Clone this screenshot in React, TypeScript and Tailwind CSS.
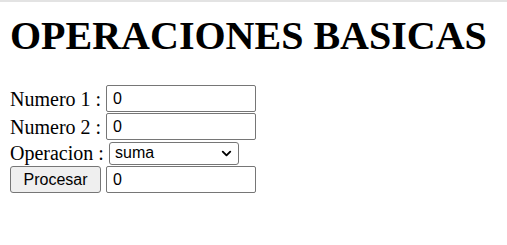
import { ChevronDown } from "lucide-react";

const serif = "font-['Liberation_Serif',_'Times_New_Roman',_serif]";
const sans = "font-['Liberation_Sans',_Arial,_sans-serif]";

function Field({ value }: { value: string }) {
  return (
    <div className={`w-[150px] h-[27px] border border-[#767676] rounded-[2px] bg-white flex items-center pl-[6px] text-[16px] text-black ${sans}`}>
      {value}
    </div>
  );
}

export default function App() {
  return (
    <div className="w-[507px] h-[245px] bg-white border-t-2 border-[#e3e3e3] text-black">
      <div className="pl-[10px] pt-[11px]">
        <h1 className={`${serif} font-bold text-[40px] leading-[46px]`}>OPERACIONES BASICAS</h1>

        <div className={`${serif} text-[20px] mt-[26px] flex flex-col`}>
          <div className="flex items-center h-[27px]">
            <span className="w-[96px]">Numero 1 :</span>
            <Field value="0" />
          </div>
          <div className="flex items-center h-[27px] mt-[1px]">
            <span className="w-[96px]">Numero 2 :</span>
            <Field value="0" />
          </div>
          <div className="flex items-center h-[26px]">
            <span className="w-[99px]">Operacion :</span>
            <div className={`w-[130px] h-[23px] border border-[#767676] rounded-[3px] flex items-center justify-between pl-[5px] pr-[4px] text-[16px] ${sans}`}>
              <span>suma</span>
              <ChevronDown className="w-[15px] h-[15px]" strokeWidth={3} />
            </div>
          </div>
          <div className="flex items-center h-[27px]">
            <button className={`w-[91px] h-[27px] mr-[5px] bg-[#efefef] border border-[#767676] rounded-[3px] text-[16px] ${sans}`}>
              Procesar
            </button>
            <Field value="0" />
          </div>
        </div>
      </div>
    </div>
  );
}
